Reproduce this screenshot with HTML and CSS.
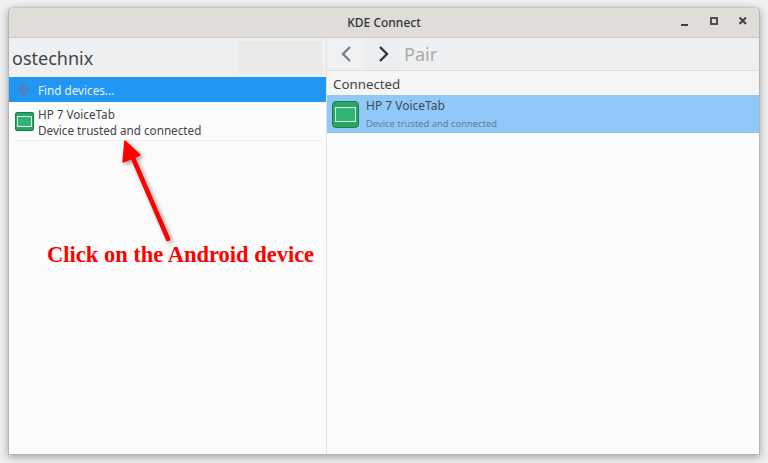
FILE: index.html
```html
<!doctype html>
<html>
<head>
<meta charset="utf-8">
<title>KDE Connect</title>
<link rel="stylesheet" href="styles.css">
</head>
<body>
<div class="window">
	<div class="titlebar">
		<span class="title">KDE Connect</span>
		<div class="controls">
			<svg width="12" height="12" viewBox="0 0 12 12"><path d="M1 9h7" stroke="#3d4245" stroke-width="2"/></svg>
			<svg width="12" height="12" viewBox="0 0 12 12"><rect x="2" y="2" width="6" height="6" fill="none" stroke="#3d4245" stroke-width="1.8"/></svg>
			<svg width="12" height="12" viewBox="0 0 12 12"><path d="M1.5 1.5l6.5 6.5M8 1.5l-6.500 6.500" stroke="#3d4245" stroke-width="2"/></svg>
		</div>
	</div>
	<div class="main">
		<div class="left">
			<div class="namebar">
				<span class="hostname">ostechnix</span>
				<div class="namebtn"></div>
			</div>
			<div class="find">
				<svg class="plus" width="13" height="13" viewBox="0 0 13 13"><path d="M4.500 0h4v4.500H13v4H8.500V13h-4V8.500H0v-4h4.500z" fill="#4a80c4"/></svg>
				<span>Find devices...</span>
			</div>
			<div class="device">
				<div class="tablet small"><i></i></div>
				<div class="lines">
					<div>HP 7 VoiceTab</div>
					<div>Device trusted and connected</div>
				</div>
			</div>
		</div>
		<div class="right">
			<div class="toolbar">
				<div class="navbtn back">
					<svg width="14" height="18" viewBox="0 0 14 18"><path d="M11 2L4 9l7 7" fill="none" stroke="#7b7e81" stroke-width="2.400"/></svg>
				</div>
				<div class="navbtn next">
					<svg width="14" height="18" viewBox="0 0 14 18"><path d="M3 2l7 7-7 7" fill="none" stroke="#31363b" stroke-width="2.400"/></svg>
				</div>
				<span class="pair">Pair</span>
			</div>
			<div class="section">Connected</div>
			<div class="selected">
				<div class="tablet big"><i></i></div>
				<div class="seltext">
					<div class="selname">HP 7 VoiceTab</div>
					<div class="selsub">Device trusted and connected</div>
				</div>
			</div>
		</div>
	</div>
</div>

<svg class="arrow" width="70" height="130" viewBox="0 0 70 130">
	<defs>
		<filter id="shadow" x="-30%" y="-30%" width="160%" height="160%">
			<feDropShadow dx="2" dy="2" stdDeviation="2" flood-color="#000" flood-opacity="0.4"/>
		</filter>
	</defs>
	<g filter="url(#shadow)">
		<path d="M53 107L18 26" stroke="#f00" stroke-width="4.500" stroke-linecap="round"/>
		<path d="M10 9L25 23 8 30z" fill="#f00" stroke="#f00" stroke-width="1.500" stroke-linejoin="round"/>
	</g>
</svg>
<div class="note">Click on the Android device</div>
</body>
</html>
```

FILE: styles.css
```css
*{margin:0;padding:0;box-sizing:border-box;}
body{width:768px;height:463px;padding:7px 8px 8px;background:#f1f1f1;overflow:hidden;font-family:"Noto Sans",sans-serif;color:#31363b;}

.window{display:flex;flex-direction:column;height:448px;border:1px solid #b4b4b2;border-top-color:#c8c8c6;border-radius:6px 6px 0 0;overflow:hidden;box-shadow:0 2px 8px rgba(0,0,0,.35);background:#fcfcfc;}

.titlebar{position:relative;display:flex;align-items:center;justify-content:center;flex:none;height:30px;background:#e0dcd8;border-bottom:1px solid #cdc9c5;}
.title{font-size:12px;font-weight:500;color:#2e3436;}
.controls{position:absolute;right:9px;top:8px;display:flex;gap:17px;}

.main{display:flex;flex:1;}
.left{width:318px;flex:none;border-right:1px solid #e2e3e4;}
.right{flex:1;}

.namebar{display:flex;justify-content:space-between;align-items:center;height:39px;padding:3px 4px 3px 3px;background:#eff0f1;}
.hostname{font-size:18px;line-height:35px;padding-top:2px;color:#3f4449;}
.namebtn{width:84px;height:33px;background:#eceae8;}

.find{display:flex;align-items:center;gap:8px;height:25px;padding-left:8px;background:#2196f3;color:#e8f3fc;font-size:11.700px;}
.plus{flex:none;}

.device{display:flex;align-items:center;gap:4px;height:39px;margin:0 5px 0 6px;padding-top:2px;border-bottom:1px solid #eeeeee;font-size:11.700px;line-height:16px;color:#3f4449;}

.tablet{flex:none;display:flex;align-items:center;justify-content:center;background:#27a566;border:1px solid #1f7a4d;}
.tablet i{display:block;border:1px solid #e4f2ea;background:#2fb471;}
.small{width:19px;height:19px;border-radius:2px;margin-top:-1px;}
.small i{width:15px;height:11px;}
.big{width:27px;height:27px;border-radius:4px;}
.big i{width:21px;height:15px;}

.toolbar{display:flex;align-items:center;height:33px;background:#eff0f1;border-bottom:1px solid #dcdddf;}
.navbtn{display:flex;align-items:center;justify-content:center;height:32px;}
.back{width:37px;background:#f0f1f2;}
.next{width:36px;background:#eceeef;padding-left:4px;}
.pair{margin-left:4px;font-size:18px;color:#a7aaad;}

.section{height:24px;padding-left:6px;font-size:13.300px;line-height:26px;background:#f5f5f5;color:#3f4449;}

.selected{display:flex;align-items:center;gap:7px;height:38px;padding-left:5px;background:#90c9f7;}
.selname{font-size:12px;line-height:18px;color:#3d4a56;}
.selsub{font-size:9.400px;line-height:14px;margin-top:2px;color:#5c7d98;}

.arrow{position:absolute;left:115px;top:132px;}
.note{position:absolute;left:47px;top:242px;font-family:"Liberation Serif",serif;font-size:22.500px;font-weight:bold;line-height:26px;color:#f00;white-space:nowrap;}
```
